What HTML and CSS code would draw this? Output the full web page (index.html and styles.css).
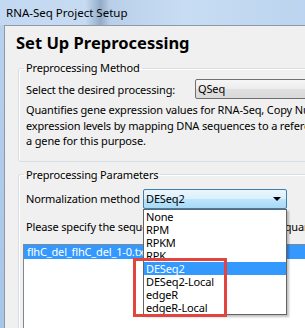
FILE: index.html
```html
<!DOCTYPE html>
<html lang="en">
<head>
    <meta charset="UTF-8">
    <title>RNA-Seq Project Setup</title>
    <link rel="stylesheet" href="styles.css">
</head>
<body>

<div class="titlebar">RNA-Seq Project Setup</div>

<div class="dialog">
    <h1 class="heading">Set Up Preprocessing</h1>

    <fieldset class="group">
        <legend>Preprocessing Method</legend>
        <div class="row">
            <span class="label label-wide">Select the desired processing:</span>
            <div class="combo combo-plain">QSeq</div>
        </div>
        <p class="desc">
            Quantifies gene expression values for RNA-Seq, Copy Number and ChIP-Seq<br>
            expression levels by mapping DNA sequences to a reference, counting reads for<br>
            a gene for this purpose.
        </p>
    </fieldset>

    <fieldset class="group group-params">
        <legend>Preprocessing Parameters</legend>
        <div class="row">
            <span class="label">Normalization method</span>
            <div class="combo combo-hot">
                DESeq2
                <span class="arrow"></span>
                <ul class="dropdown">
                    <li>None</li>
                    <li>RPM</li>
                    <li>RPKM</li>
                    <li>RPK</li>
                    <li class="selected">DESeq2</li>
                    <li>DESeq2-Local</li>
                    <li>edgeR</li>
                    <li>edgeR-Local</li>
                </ul>
                <div class="callout"></div>
            </div>
        </div>
        <p class="hint">Please specify the sequence files to be analysed for quantification:</p>
        <div class="listbox">
            <div class="list-item selected">flhC_del_flhC_del_1-0.txt</div>
        </div>
    </fieldset>
</div>

</body>
</html>
```

FILE: styles.css
```css
/* Window */
body { margin: 0; width: 305px; height: 328px; overflow: hidden; font-family: "Noto Sans", sans-serif; font-size: 11px; letter-spacing: -0.15px; color: #000;
    background: linear-gradient(to bottom, #b9d2ee, #a7c5e6); }

.titlebar { height: 25px; line-height: 25px; padding-left: 6px; font-size: 11.5px; letter-spacing: 0; white-space: nowrap;
    background: linear-gradient(to right, #c3d9f1 0%, #c6dbf2 28%, #93abc8 33%, #b9cfe9 36%, #c8ddf3 60%, #bcd4ef 100%); }

.dialog { margin-left: 4px; width: 420px; height: 303px; box-sizing: border-box; overflow: hidden; background: #f0f0f0;
    border-top: 1px solid #8d99a8; border-left: 1px solid #8d99a8; padding: 7px 0 0 11px; }

.heading { margin: 0; font-size: 16.5px; font-weight: bold; line-height: 20px; letter-spacing: 0; white-space: nowrap; }

/* Group boxes */
.group { margin: 8px 0 0 2px; padding: 4px 0 12px 7px; border: 1px solid #d5dfe5; border-radius: 3px; box-shadow: inset 1px 1px 0 #fff; }
.group legend { padding: 0 2px; margin-left: -2px; line-height: 14px; }
.group-params { margin-top: 6px; padding-top: 7px; padding-bottom: 40px; }

.row { display: flex; align-items: center; height: 20px; white-space: nowrap; }
.label { width: 117px; }
.label-wide { width: 169px; }

.desc { margin: 3px 0 0; line-height: 15.5px; white-space: nowrap; }
.hint { margin: 10px 0 0; line-height: 15px; white-space: nowrap; }

/* Combo boxes */
.combo { position: relative; box-sizing: border-box; height: 20px; line-height: 18px; padding-left: 2px; border-radius: 2px; }
.combo-plain { width: 200px; border: 1px solid #707070; background: linear-gradient(to bottom, #f6f6f6, #ececec 50%, #e0e0e0 51%, #d9d9d9); }
.combo-hot { width: 144px; border: 1px solid #3c7fb1; background: linear-gradient(to bottom, #eaf6fd, #d9f0fc 50%, #bee6fd 51%, #a7d9f5); }
.arrow { position: absolute; right: 5px; top: 7px; border-left: 4px solid transparent; border-right: 4px solid transparent; border-top: 4px solid #000; }

/* Drop-down list */
.dropdown { position: absolute; top: 19px; left: -1px; width: 144px; box-sizing: border-box; margin: 0; padding: 0; list-style: none;
    background: #fff; border: 1px solid #646464; box-shadow: 2px 2px 2px rgba(0, 0, 0, 0.25); z-index: 2; }
.dropdown li { height: 13px; line-height: 13px; padding-left: 2px; }
.dropdown li.selected { background: #3399ff; color: #fff; }

.callout { position: absolute; left: -11px; top: 68px; width: 88px; height: 53px; border: 3px solid #e2453f; z-index: 3; }

/* List box */
.listbox { margin: 10px 0 0 -3px; height: 120px; background: #fff; border: 1px solid #828790; }
.list-item { height: 14px; line-height: 14px; padding-left: 3px; white-space: nowrap; }
.list-item.selected { background: #3399ff; color: #fff; }
```
